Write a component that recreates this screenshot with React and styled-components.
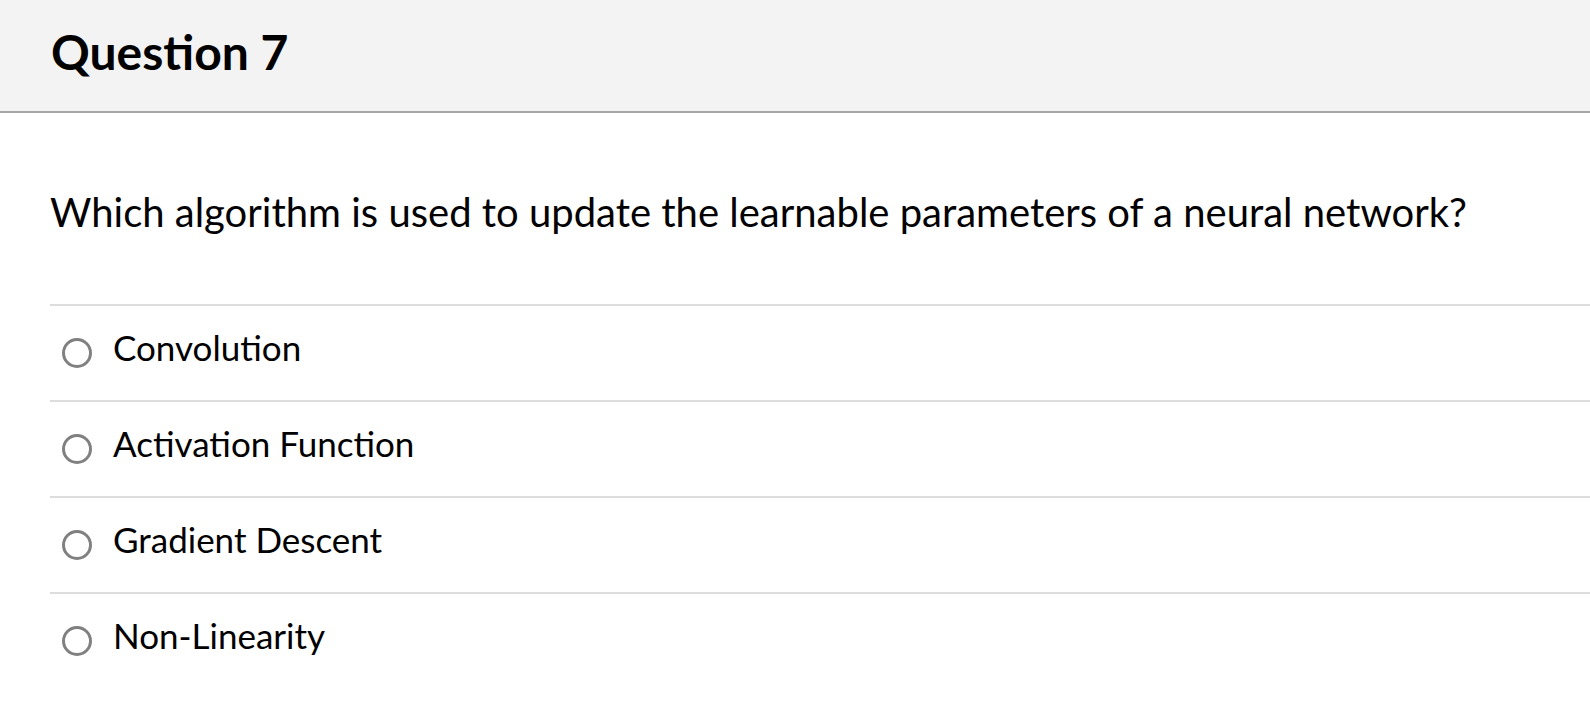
import React from 'react';
import styled, { createGlobalStyle } from 'styled-components';

const GlobalStyle = createGlobalStyle`
  html, body {
    margin: 0;
    padding: 0;
    background: #ffffff;
    font-family: Lato, "Noto Sans", sans-serif;
    color: #000000;
  }
`;

const options = ['Convolution', 'Activation Function', 'Gradient Descent', 'Non-Linearity'];

const Page = styled.div`
  width: 1590px;
  min-height: 725px;
  background: #ffffff;
`;

const Header = styled.header`
  height: 113px;
  box-sizing: border-box;
  padding-left: 51px;
  display: flex;
  align-items: center;
  background: #f3f3f3;
  border-bottom: 2px solid #a6a6a6;
`;

const Title = styled.h2`
  margin: 0;
  font-size: 48px;
  font-weight: 700;
  line-height: 1;
  padding-bottom: 8px;
`;

const Body = styled.div`
  padding-left: 50px;
`;

const Prompt = styled.p`
  margin: 0;
  padding: 75px 0 68px;
  font-size: 40px;
  line-height: 48px;
`;

const Answers = styled.ul`
  list-style: none;
  margin: 0;
  padding: 0;
`;

const Answer = styled.li`
  height: 94px;
  display: flex;
  align-items: center;
  border-top: 2px solid #dddddd;
`;

const Radio = styled.span`
  width: 30px;
  height: 30px;
  box-sizing: border-box;
  margin-left: 12px;
  margin-right: 21px;
  border: 3px solid #808080;
  border-radius: 50%;
  flex-shrink: 0;
`;

const Label = styled.span`
  font-size: 35px;
  line-height: 42px;
  margin-bottom: 12px;
`;

export default function App() {
  return (
    <Page>
      <GlobalStyle />
      <Header>
        <Title>Question 7</Title>
      </Header>
      <Body>
        <Prompt>Which algorithm is used to update the learnable parameters of a neural network?</Prompt>
        <Answers>
          {options.map((o) => (
            <Answer key={o}>
              <Radio />
              <Label>{o}</Label>
            </Answer>
          ))}
        </Answers>
      </Body>
    </Page>
  );
}
